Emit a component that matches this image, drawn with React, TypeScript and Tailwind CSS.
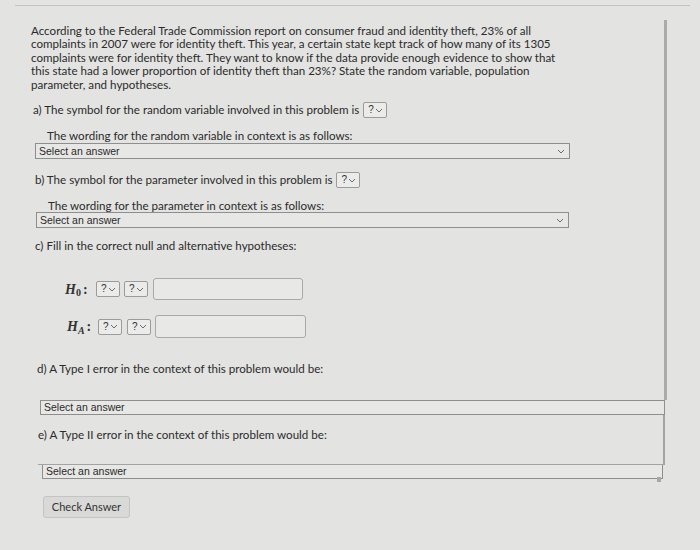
const Chevron = () => (
  <svg width="8" height="5" viewBox="0 0 8 5" className="shrink-0">
    <path d="M1 1l3 3 3-3" fill="none" stroke="#6b6b6b" strokeWidth="1" />
  </svg>
)

// small "? v" dropdown used inline in the questions
const QSelect = ({ className = '' }: { className?: string }) => (
  <span
    className={`inline-flex h-[16px] w-[24px] items-center justify-between rounded-[2px] border border-[#9b9b9b] bg-[#ebebe9] pl-[4px] pr-[3px] font-['Liberation_Sans'] text-[10px] leading-none text-[#333] ${className}`}
  >
    ?<Chevron />
  </span>
)

const AnswerSelect = ({ className = '', chevron = true }: { className?: string; chevron?: boolean }) => (
  <div
    className={`flex items-center justify-between border border-[#8e8e8e] bg-[#e7e7e5] pl-[3px] pr-[4px] font-['Liberation_Sans'] text-[10.5px] leading-none text-[#2a2a2a] ${className}`}
  >
    <span>Select an answer</span>
    {chevron && <Chevron />}
  </div>
)

const Hyp = ({ sub }: { sub: string }) => (
  <span className="w-[29px] whitespace-nowrap font-['Liberation_Serif'] text-[14px] font-bold italic text-[#333]">
    H<sub className={`text-[10px] ${sub === '0' ? 'not-italic' : ''}`}>{sub}</sub>
    <span className="ml-[2px] not-italic">:</span>
  </span>
)

export default function App() {
  return (
    <div className="h-[550px] w-[700px] overflow-hidden bg-[#e3e3e1] font-['Lato',sans-serif] text-[11.6px] text-[#2b2b2b]">
      <div className="ml-[15px] mr-[10px] mt-[5px] h-px bg-[#c2c2c0]" />

      <div className="mt-[14px] w-[667px] border-r-[3px] border-[#ababab] pb-[24px] pl-[31px] pt-[4px]">
        <p className="whitespace-nowrap leading-[13.4px]">
          According to the Federal Trade Commission report on consumer fraud and identity theft, 23% of all
          <br />
          complaints in 2007 were for identity theft. This year, a certain state kept track of how many of its 1305
          <br />
          complaints were for identity theft. They want to know if the data provide enough evidence to show that
          <br />
          this state had a lower proportion of identity theft than 23%? State the random variable, population
          <br />
          parameter, and hypotheses.
        </p>

        <div className="ml-[2px] mt-[11px] flex h-[16px] items-center gap-[4px]">
          <span>a) The symbol for the random variable involved in this problem is</span>
          <QSelect />
        </div>
        <div className="ml-[16px] mt-[12px] leading-[12px]">The wording for the random variable in context is as follows:</div>
        <AnswerSelect className="ml-[4px] mt-[1px] h-[16px] w-[535px]" />

        <div className="ml-[4px] mt-[13px] flex h-[16px] items-center gap-[4px]">
          <span>b) The symbol for the parameter involved in this problem is</span>
          <QSelect />
        </div>
        <div className="ml-[17px] mt-[12px] leading-[12px]">The wording for the parameter in context is as follows:</div>
        <AnswerSelect className="ml-[5px] h-[16px] w-[533px]" />

        <div className="ml-[4px] mt-[11px] leading-[14px]">c) Fill in the correct null and alternative hypotheses:</div>

        <div className="ml-[34px] mt-[25px] flex h-[22px] items-center">
          <Hyp sub="0" />
          <QSelect className="ml-[2px]" />
          <QSelect className="ml-[4px]" />
          <div className="ml-[5px] h-[22px] w-[150px] rounded-[3px] border border-[#a9a9a9] bg-[#e8e8e6]" />
        </div>
        <div className="ml-[36px] mt-[15px] flex h-[23px] items-center">
          <Hyp sub="A" />
          <QSelect className="ml-[2px]" />
          <QSelect className="ml-[5px]" />
          <div className="ml-[4px] h-[23px] w-[151px] rounded-[3px] border border-[#a9a9a9] bg-[#e8e8e6]" />
        </div>

        <div className="ml-[6px] mt-[24px] leading-[14px]">d) A Type I error in the context of this problem would be:</div>
      </div>

      <AnswerSelect className="ml-[40px] h-[15px] w-[625px]" chevron={false} />

      <div className="ml-[38px] h-[50px] w-[627px] border-b border-r-2 border-[#a3a3a3] pt-[13px] leading-[14px]">
        e) A Type II error in the context of this problem would be:
      </div>

      <div className="relative ml-[42px] w-[621px]">
        <AnswerSelect className="h-[14px] w-full border-t-0" chevron={false} />
        <div className="absolute right-[2px] top-[12px] h-[5px] w-[4px] bg-[#a8a8a8]" />
      </div>

      <button className="ml-[43px] mt-[17px] flex h-[22px] w-[87px] items-center justify-center rounded-[3px] border border-[#c4c4c2] bg-[#d9d9d7] text-[11px] text-[#333]">
        Check Answer
      </button>
    </div>
  )
}
